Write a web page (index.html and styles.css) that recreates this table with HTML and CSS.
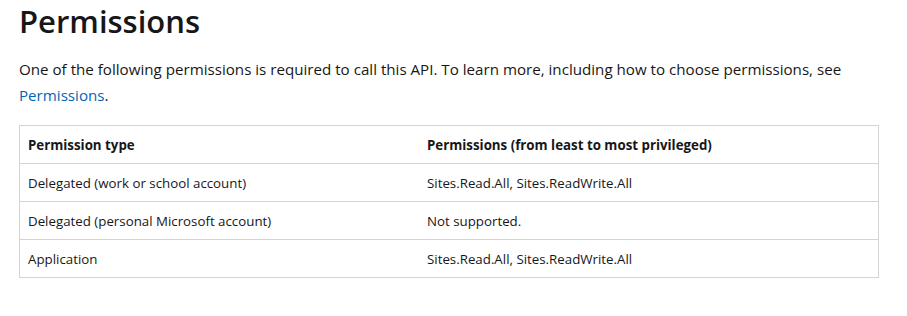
FILE: index.html
```html
<!DOCTYPE html>
<html lang="en">
<head>
    <meta charset="UTF-8">
    <meta name="viewport" content="width=device-width, initial-scale=1.0">
    <title>Permissions</title>
    <link rel="stylesheet" href="styles.css">
</head>
<body>

    <main class="content">
        <h2 class="section-title">Permissions</h2>

        <p class="intro">
            One of the following permissions is required to call this API. To learn more, including how to choose permissions, see
            <a href="#">Permissions</a>.
        </p>

        <table class="perm-table">
            <thead>
                <tr>
                    <th>Permission type</th>
                    <th>Permissions (from least to most privileged)</th>
                </tr>
            </thead>
            <tbody>
                <tr>
                    <td>Delegated (work or school account)</td>
                    <td>Sites.Read.All, Sites.ReadWrite.All</td>
                </tr>
                <tr>
                    <td>Delegated (personal Microsoft account)</td>
                    <td>Not supported.</td>
                </tr>
                <tr>
                    <td>Application</td>
                    <td>Sites.Read.All, Sites.ReadWrite.All</td>
                </tr>
            </tbody>
        </table>
    </main>

</body>
</html>
```
FILE: styles.css
```css
/* page */
body {
    margin: 0;
    font-family: "Open Sans", "Noto Sans", sans-serif;
    color: #171717;
    background-color: #ffffff;
}

.content {
    padding: 0 28px 0 19px;
}

.section-title {
    margin: 0;
    font-size: 31px;
    font-weight: 600;
    line-height: 42px;
}

.intro {
    margin: 15px 0 17px;
    font-size: 15.15px;
    line-height: 25.6px;
}

.intro a {
    color: #0065b3;
    text-decoration: none;
}

/* table */
.perm-table {
    width: 100%;
    border-collapse: collapse;
    table-layout: fixed;
    border: 1px solid #d4d4d4;
    font-size: 13.3px;
    line-height: 21px;
}

.perm-table th,
.perm-table td {
    padding: 9px 8px 7px;
    text-align: left;
    border-top: 1px solid #d4d4d4;
}

.perm-table th {
    font-weight: 700;
}

.perm-table th:first-child {
    width: 383px;
}
```
